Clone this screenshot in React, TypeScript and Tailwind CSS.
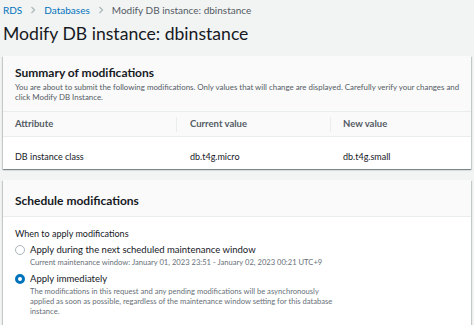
import React from 'react';

const Chevron = () => (
  <svg width="8" height="8" viewBox="0 0 8 8" className="mx-[7px] text-[#aab7b8]">
    <path d="M2.5 1 L5.5 4 L2.5 7" fill="none" stroke="currentColor" strokeWidth="1.2" />
  </svg>
);

const Radio: React.FC<{ checked?: boolean }> = ({ checked }) =>
  checked ? (
    <span className="mt-[2px] w-[10px] h-[10px] rounded-full border-[3px] border-[#0073bb] bg-white flex-shrink-0" />
  ) : (
    <span className="mt-[2px] w-[10px] h-[10px] rounded-full border border-[#aab7b8] bg-white flex-shrink-0" />
  );

const cardShadow =
  'bg-white shadow-[0_1px_1px_0_rgba(0,28,36,0.3),1px_1px_1px_0_rgba(0,28,36,0.15),-1px_1px_1px_0_rgba(0,28,36,0.15)]';

export default function App() {
  return (
    <div
      className="w-[474px] h-[325px] overflow-hidden bg-[#f2f3f3] text-[#16191f] px-[3px]"
      style={{ fontFamily: 'Lato, "Open Sans", Arial, sans-serif' }}
    >
      {/* Breadcrumbs */}
      <div className="flex items-center h-[18px] mt-[1px] text-[10px]">
        <span className="text-[#0073bb]">RDS</span>
        <Chevron />
        <span className="text-[#0073bb]">Databases</span>
        <Chevron />
        <span className="text-[#545b64]">Modify DB instance: dbinstance</span>
      </div>

      <h1 className="text-[17.6px] leading-[28px] mt-[1px]">Modify DB instance: dbinstance</h1>

      {/* Summary card */}
      <div className={`mt-[8px] ${cardShadow}`}>
        <div className="bg-[#fafafa] pl-[12px] pr-[6px] pt-[9px] h-[56px] border-b border-[#eaeded]">
          <h2 className="text-[12px] font-bold leading-[16px]">Summary of modifications</h2>
          <p className="text-[7.9px] leading-[10px] text-[#545b64] mt-[1px]">
            You are about to submit the following modifications. Only values that will change are displayed. Carefully verify your changes and click Modify DB Instance.
          </p>
        </div>
        <div className="grid grid-cols-[174px_154px_1fr] bg-[#fafafa] border-b border-[#eaeded] text-[9.5px] font-bold text-[#545b64] h-[25px] items-center">
          <div className="pl-[12px] border-r border-[#eaeded] h-[15px] flex items-center">Attribute</div>
          <div className="pl-[13px] border-r border-[#eaeded] h-[15px] flex items-center">Current value</div>
          <div className="pl-[12px]">New value</div>
        </div>
        <div className="grid grid-cols-[174px_154px_1fr] text-[9px] h-[32px] pt-[14px] leading-[12px]">
          <div className="pl-[12px]">DB instance class</div>
          <div className="pl-[13px]">db.t4g.micro</div>
          <div className="pl-[12px]">db.t4g.small</div>
        </div>
      </div>

      {/* Schedule card */}
      <div className={`mt-[11px] ${cardShadow}`}>
        <div className="bg-[#fafafa] px-[12px] pt-[12px] h-[37px] border-b border-[#eaeded]">
          <h2 className="text-[12px] font-bold leading-[17px]">Schedule modifications</h2>
        </div>
        <div className="px-[12px] pt-[10px] pb-[10px]">
          <div className="text-[9px] leading-[13px]">When to apply modifications</div>
          <div className="flex gap-[5px] mt-[3px]">
            <Radio />
            <div>
              <div className="text-[9.5px] leading-[14px]">Apply during the next scheduled maintenance window</div>
              <div className="text-[7.6px] leading-[10px] text-[#687078]">
                Current maintenance window: January 01, 2023 23:51 - January 02, 2023 00:21 UTC+9
              </div>
            </div>
          </div>
          <div className="flex gap-[5px] mt-[5px]">
            <Radio checked />
            <div>
              <div className="text-[9.5px] leading-[14px]">Apply immediately</div>
              <div className="text-[7.6px] leading-[10px] text-[#687078] w-[312px]">
                The modifications in this request and any pending modifications will be asynchronously applied as soon as possible, regardless of the maintenance window setting for this database instance.
              </div>
            </div>
          </div>
        </div>
      </div>
    </div>
  );
}
